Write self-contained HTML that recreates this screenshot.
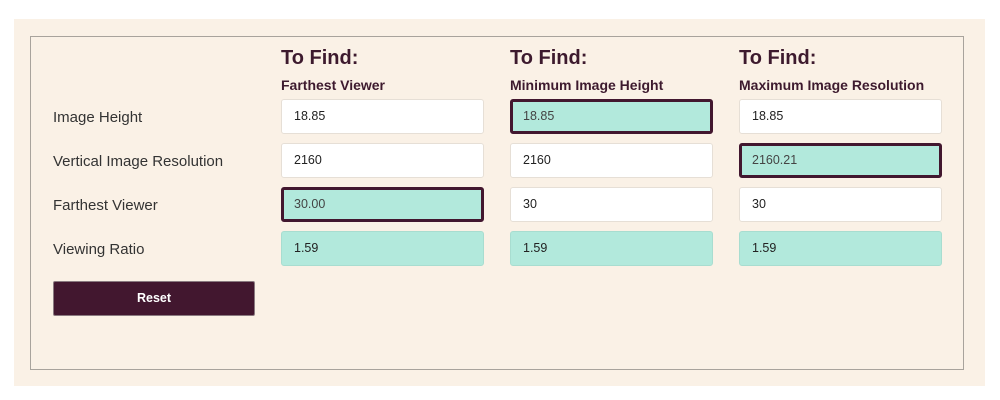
<!DOCTYPE html>
<html><head><style>
body{margin:0;width:1000px;height:400px;background:#fff;font-family:"Liberation Sans",sans-serif;position:relative;overflow:hidden}
.outer{position:absolute;left:14px;top:19px;width:971px;height:367px;background:#faf1e6}
.inner{position:absolute;left:30px;top:36px;width:932px;height:332px;border:1px solid #a8a39c}
.h{position:absolute;font-weight:bold;color:#3d1a2e;font-size:20px;top:47px}
.s{position:absolute;font-weight:bold;color:#3d1a2e;font-size:14px;top:77px}
.l{position:absolute;left:53px;font-size:15px;color:#333;}
.i{position:absolute;width:201px;height:33px;background:#fff;border:1px solid #e6dfd6;border-radius:3px;box-sizing:content-box;font-size:12.5px;color:#222;line-height:33px;text-indent:12px}
.t{background:#b2e9dc;border-color:#a8ddd0}
.b{border:3px solid #42172f;width:197px;height:29px;line-height:29px;text-indent:10px;color:#444}
.btn{position:absolute;left:53px;top:281px;width:200px;height:33px;background:#42172f;border:1px solid #8a7a80;border-radius:2px;color:#fff;font-weight:bold;font-size:12.5px;text-align:center;line-height:33px}
</style></head><body>
<div class="outer"></div><div class="inner"></div>
<div class="h" style="left:281px">To Find:</div>
<div class="h" style="left:510px">To Find:</div>
<div class="h" style="left:739px">To Find:</div>
<div class="s" style="left:281px">Farthest Viewer</div>
<div class="s" style="left:510px">Minimum Image Height</div>
<div class="s" style="left:739px">Maximum Image Resolution</div>
<div class="l" style="top:109px">Image Height</div>
<div class="l" style="top:153px">Vertical Image Resolution</div>
<div class="l" style="top:197px">Farthest Viewer</div>
<div class="l" style="top:241px">Viewing Ratio</div>
<div class="i" style="left:281px;top:99px">18.85</div>
<div class="i t b" style="left:510px;top:99px">18.85</div>
<div class="i" style="left:739px;top:99px">18.85</div>
<div class="i" style="left:281px;top:143px">2160</div>
<div class="i" style="left:510px;top:143px">2160</div>
<div class="i t b" style="left:739px;top:143px">2160.21</div>
<div class="i t b" style="left:281px;top:187px">30.00</div>
<div class="i" style="left:510px;top:187px">30</div>
<div class="i" style="left:739px;top:187px">30</div>
<div class="i t" style="left:281px;top:231px">1.59</div>
<div class="i t" style="left:510px;top:231px">1.59</div>
<div class="i t" style="left:739px;top:231px">1.59</div>
<div class="btn">Reset</div>
</body></html>
